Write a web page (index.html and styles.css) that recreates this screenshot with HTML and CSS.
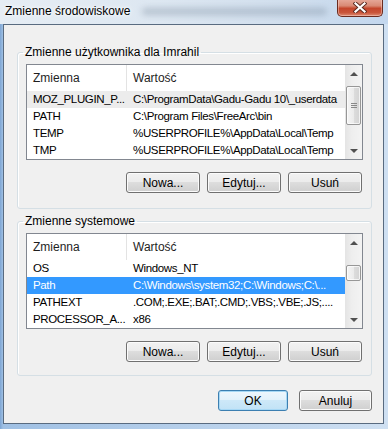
FILE: index.html
```html
<!DOCTYPE html>
<html>
<head>
<meta charset="utf-8">
<title>Zmienne środowiskowe</title>
<link rel="stylesheet" href="styles.css">
</head>
<body>

<div class="window">
  <div class="titlebar">
    <span class="title">Zmienne środowiskowe</span>
    <span class="glass-blur"></span>
    <div class="close-btn">
      <svg width="14" height="11" viewBox="0 0 14 11">
        <path d="M2.5 1.5 L11.5 9.5 M11.5 1.5 L2.5 9.5" stroke="#5a2a20" stroke-width="4" stroke-linecap="square" fill="none"/>
        <path d="M2.5 1.5 L11.5 9.5 M11.5 1.5 L2.5 9.5" stroke="#ffffff" stroke-width="2.2" stroke-linecap="square" fill="none"/>
      </svg>
    </div>
  </div>

  <div class="client">
    <!-- zmienne uzytkownika -->
    <fieldset class="group">
      <legend>Zmienne użytkownika dla Imrahil</legend>
      <div class="listview">
        <div class="lv-body">
          <div class="lv-header"><span class="col1">Zmienna</span><span class="col2">Wartość</span></div>
          <div class="lv-row hot"><span class="col1">MOZ_PLUGIN_P...</span><span class="col2">C:\ProgramData\Gadu-Gadu 10\_userdata</span></div>
          <div class="lv-row"><span class="col1">PATH</span><span class="col2">C:\Program Files\FreeArc\bin</span></div>
          <div class="lv-row"><span class="col1">TEMP</span><span class="col2">%USERPROFILE%\AppData\Local\Temp</span></div>
          <div class="lv-row"><span class="col1">TMP</span><span class="col2">%USERPROFILE%\AppData\Local\Temp</span></div>
        </div>
        <div class="scrollbar">
          <div class="sb-arrow"><span class="tri-up"></span></div>
          <div class="sb-track"><div class="sb-thumb thumb-user"><span class="grip"></span></div></div>
          <div class="sb-arrow"><span class="tri-down"></span></div>
        </div>
      </div>
      <div class="buttons">
        <button class="btn">Nowa...</button>
        <button class="btn">Edytuj...</button>
        <button class="btn">Usuń</button>
      </div>
    </fieldset>

    <!-- zmienne systemowe -->
    <fieldset class="group group-sys">
      <legend>Zmienne systemowe</legend>
      <div class="listview">
        <div class="lv-body">
          <div class="lv-header"><span class="col1">Zmienna</span><span class="col2">Wartość</span></div>
          <div class="lv-row"><span class="col1">OS</span><span class="col2">Windows_NT</span></div>
          <div class="lv-row selected"><span class="col1">Path</span><span class="col2">C:\Windows\system32;C:\Windows;C:\...</span></div>
          <div class="lv-row"><span class="col1">PATHEXT</span><span class="col2">.COM;.EXE;.BAT;.CMD;.VBS;.VBE;.JS;....</span></div>
          <div class="lv-row"><span class="col1">PROCESSOR_A...</span><span class="col2">x86</span></div>
        </div>
        <div class="scrollbar">
          <div class="sb-arrow"><span class="tri-up"></span></div>
          <div class="sb-track"><div class="sb-thumb thumb-sys"></div></div>
          <div class="sb-arrow"><span class="tri-down"></span></div>
        </div>
      </div>
      <div class="buttons">
        <button class="btn">Nowa...</button>
        <button class="btn">Edytuj...</button>
        <button class="btn">Usuń</button>
      </div>
    </fieldset>

    <div class="dialog-buttons">
      <button class="btn btn-default btn-ok">OK</button>
      <button class="btn btn-cancel">Anuluj</button>
    </div>
  </div>
</div>

</body>
</html>
```

FILE: styles.css
```css
/* styles.css */

body {
  margin: 0;
  font-family: "Liberation Sans", Arial, sans-serif;
  font-size: 12px;
  color: #000;
}

.window {
  width: 388px;
  height: 429px;
  display: flex;
  flex-direction: column;
  background: linear-gradient(to right, #7ea6d4 0, #9fc0e4 3px, #bcd3ec 60%, #cfe0f2 100%);
  overflow: hidden;
}

/* pasek tytulu (szklo) */
.titlebar {
  height: 24px;
  display: flex;
  align-items: flex-start;
  background: linear-gradient(to right, #e6edf4 0, #dde7f1 40%, #d0deed 75%, #c3d7ee 100%);
}
.title {
  padding: 4px 0 0 5px;
  line-height: 15px;
  white-space: nowrap;
  text-shadow: 0 0 6px #fff, 0 0 3px #fff;
}
.glass-blur {
  width: 185px;
  height: 7px;
  margin: 8px 0 0 12px;
  border-radius: 4px;
  background: rgba(110, 125, 145, 0.35);
  filter: blur(3px);
}
.close-btn {
  width: 46px;
  height: 18px;
  margin: -1px 5px 0 auto;
  box-sizing: border-box;
  border: 1px solid #6b2b1f;
  border-top: none;
  border-radius: 0 0 5px 5px;
  background: linear-gradient(#e7ab9c 0, #d98a75 40%, #c4462c 55%, #c9553a 80%, #de8c73 100%);
  box-shadow: inset 0 0 0 1px rgba(255, 220, 210, 0.45);
  display: flex;
  align-items: center;
  justify-content: center;
}

/* obszar klienta */
.client {
  flex: 1;
  margin: 0 4px 5px 3px;
  border: 1px solid #596b80;
  background: #f0f0f0;
  display: flex;
  flex-direction: column;
}

.group {
  margin: 20px 11px 0 13px;
  padding: 0;
  border: 1px solid #d5dfe5;
  border-radius: 3px;
  box-shadow: inset 1px 1px 0 #fff;
  min-width: 0;
}
.group-sys {
  margin-top: 5px;
}
.group-sys .buttons {
  margin-bottom: 13px;
}
.group legend {
  margin-left: 5px;
  padding: 0 2px;
  line-height: 14px;
}

.listview {
  height: 96px;
  margin: 5px 8px 0 8px;
  box-sizing: border-box;
  border: 1px solid #828790;
  background: #fff;
  display: flex;
}
.lv-body {
  flex: 1;
  overflow: hidden;
}
.lv-header {
  height: 26px;
  display: flex;
  align-items: stretch;
  color: #1e1e1e;
}
.lv-header span {
  display: flex;
  align-items: center;
}
.col1 {
  width: 100px;
  flex: none;
  box-sizing: border-box;
  padding-left: 6px;
  white-space: nowrap;
  overflow: hidden;
}
.col2 {
  flex: 1;
  padding-left: 6px;
  white-space: nowrap;
  overflow: hidden;
}
.lv-header .col1 {
  border-right: 1px solid #e3e3e3;
}
.lv-row {
  height: 17px;
  line-height: 17px;
  display: flex;
  font-size: 11.5px;
  letter-spacing: -0.35px;
}
.lv-row.hot {
  background: #ececec;
}
.lv-row.selected {
  background: #3399ff;
  color: #fff;
}

/* pasek przewijania */
.scrollbar {
  width: 17px;
  display: flex;
  flex-direction: column;
  background: linear-gradient(to right, #e4e4e4 0, #eeeeee 40%, #f3f3f3 100%);
}
.sb-arrow {
  height: 17px;
  flex: none;
  display: flex;
  align-items: center;
  justify-content: center;
}
.tri-up {
  width: 0;
  height: 0;
  border-left: 4px solid transparent;
  border-right: 4px solid transparent;
  border-bottom: 4px solid #505050;
}
.tri-down {
  width: 0;
  height: 0;
  border-left: 4px solid transparent;
  border-right: 4px solid transparent;
  border-top: 4px solid #505050;
}
.sb-track {
  flex: 1;
  padding: 0 1px;
}
.sb-thumb {
  box-sizing: border-box;
  border: 1px solid #979797;
  border-radius: 2px;
  background: linear-gradient(to right, #f5f5f5 0, #ebebeb 50%, #dcdcdc 55%, #d3d3d3 100%);
  box-shadow: inset 0 0 0 1px rgba(255, 255, 255, 0.7);
  display: flex;
  align-items: center;
  justify-content: center;
}
.thumb-user {
  margin-top: 4px;
  height: 39px;
}
.thumb-sys {
  margin-top: 14px;
  height: 16px;
}
.grip {
  width: 6px;
  height: 5px;
  background: repeating-linear-gradient(#888 0, #888 1px, transparent 1px, transparent 2px);
}

/* przyciski */
.buttons {
  display: flex;
  justify-content: flex-end;
  gap: 7px;
  margin: 12px 9px 15px 0;
}
.btn {
  width: 74px;
  height: 21px;
  box-sizing: border-box;
  padding: 0;
  border: 1px solid #707070;
  border-radius: 3px;
  background: linear-gradient(#f2f2f2 0, #ebebeb 50%, #dddddd 50%, #cfcfcf 100%);
  box-shadow: inset 0 0 0 1px #fbfbfb;
  font-family: "Liberation Sans", Arial, sans-serif;
  font-size: 12px;
  color: #000;
}
.btn-default {
  border-color: #3c7fb1;
  background: linear-gradient(#eef7fd 0, #e2f1fb 50%, #cde8f8 50%, #c1e2f6 100%);
  box-shadow: inset 0 0 0 1px #a7d8f5;
}

.dialog-buttons {
  display: flex;
  justify-content: flex-end;
  gap: 11px;
  margin: 14px 11px 0 0;
}
.btn-ok {
  width: 70px;
}
.btn-cancel {
  width: 73px;
}
```
